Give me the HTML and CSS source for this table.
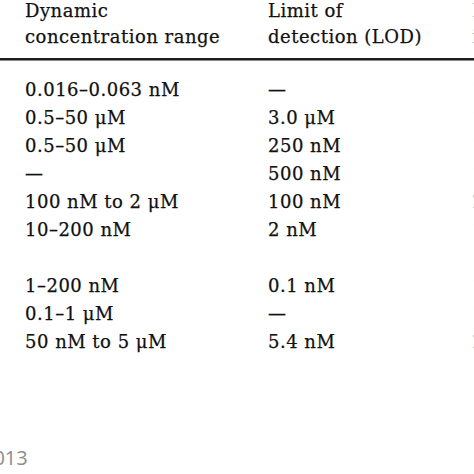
FILE: index.html
```html
<!DOCTYPE html>
<html>
<head>
<meta charset="utf-8">
<link rel="stylesheet" href="styles.css">
</head>
<body>
<div class="page">
  <div class="table">
    <div class="head">
      <div class="c1">Dynamic<br>concentration range</div>
      <div class="c2">Limit of<br>detection (LOD)</div>
      <div class="c3">Ref.<br>i</div>
    </div>
    <div class="body">
      <div class="row"><div class="c1">0.016–0.063 nM</div><div class="c2">—</div><div class="c3">1</div></div>
      <div class="row"><div class="c1">0.5–50 μM</div><div class="c2">3.0 μM</div><div class="c3">1</div></div>
      <div class="row"><div class="c1">0.5–50 μM</div><div class="c2">250 nM</div><div class="c3">1</div></div>
      <div class="row"><div class="c1">—</div><div class="c2">500 nM</div><div class="c3">1</div></div>
      <div class="row"><div class="c1">100 nM to 2 μM</div><div class="c2">100 nM</div><div class="c3">2</div></div>
      <div class="row"><div class="c1">10–200 nM</div><div class="c2">2 nM</div><div class="c3">1</div></div>
      <div class="row"><div class="c1"></div><div class="c2"></div><div class="c3"></div></div>
      <div class="row"><div class="c1">1–200 nM</div><div class="c2">0.1 nM</div><div class="c3">1</div></div>
      <div class="row"><div class="c1">0.1–1 μM</div><div class="c2">—</div><div class="c3">1</div></div>
      <div class="row"><div class="c1">50 nM to 5 μM</div><div class="c2">5.4 nM</div><div class="c3">2</div></div>
    </div>
  </div>
  <div class="footer">2013</div>
</div>
</body>
</html>
```
FILE: styles.css
```css
html, body {
  margin: 0;
  padding: 0;
  background: #ffffff;
  overflow: hidden;
}
.page {
  width: 474px;
  height: 474px;
  display: flex;
  flex-direction: column;
  overflow: hidden;
  font-family: "DejaVu Serif", serif;
  font-size: 18px;
  color: #111111;
  -webkit-text-stroke: 0.25px #111111;
  letter-spacing: 0.5px;
}
.table {
  display: flex;
  flex-direction: column;
}
.head, .row {
  display: grid;
  grid-template-columns: 25px 243px 204px 120px;
}
.head::before, .row::before {
  content: "";
}
.head {
  margin-top: -2px;
  line-height: 26px;
  padding-bottom: 8px;
  border-bottom: 2px solid #1e1e1e;
  box-shadow: 0 1px 0 #8a8a8a;
  width: 474px;
}
.body {
  padding-top: 16px;
}
.row {
  line-height: 28px;
  height: 28px;
}
.c1, .c2, .c3 {
  white-space: nowrap;
}
.c3 {
  color: #bdbdbd;
  -webkit-text-stroke: 0;
}
.footer {
  margin-top: auto;
  margin-left: -18px;
  padding-bottom: 6px;
  font-family: "Open Sans", sans-serif;
  font-size: 20px;
  line-height: 20px;
  letter-spacing: 0;
  color: #8c8c8c;
  -webkit-text-stroke: 0;
}
```
